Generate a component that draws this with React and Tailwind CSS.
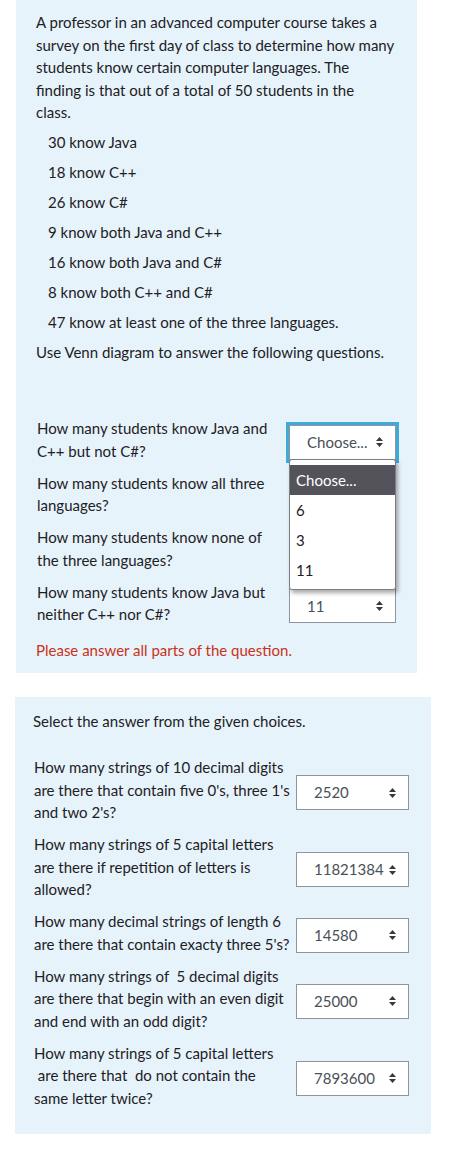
import React from "react";

const font = "font-['Lato','Open_Sans',sans-serif]";

function Arrows() {
  return (
    <svg width="7" height="10" viewBox="0 0 7 10" className="shrink-0">
      <path d="M3.5 0 L7 4 H0 Z" fill="#343a40" />
      <path d="M0 6 H7 L3.5 10 Z" fill="#343a40" />
    </svg>
  );
}

function Select({ value, width, focused }) {
  return (
    <div
      className={
        "flex h-[35px] shrink-0 items-center justify-between bg-white pl-[17px] pr-[12px] text-[#495057] " +
        width +
        (focused
          ? " border border-[#8f959e] shadow-[0_0_0_3px_#3fa9d8]"
          : " border border-[#8f959e]")
      }
    >
      <span>{value}</span>
      <Arrows />
    </div>
  );
}

function Row({ lines, children }) {
  return (
    <div className="flex items-center">
      <div className="w-[252px] shrink-0 whitespace-nowrap">
        {lines.map((l, i) => (
          <div key={i}>{l}</div>
        ))}
      </div>
      <div className="mt-[5.5px]">{children}</div>
    </div>
  );
}

const facts = [
  "30 know Java",
  "18 know C++",
  "26 know C#",
  "9 know both Java and C++",
  "16 know both Java and C#",
  "8 know both C++ and C#",
  "47 know at least one of the three languages.",
];

const second = [
  {
    lines: [
      "How many strings of 10 decimal digits",
      "are there that contain five 0's, three 1's",
      "and two 2's?",
    ],
    value: "2520",
  },
  {
    lines: [
      "How many strings of 5 capital letters",
      "are there if repetition of letters is",
      "allowed?",
    ],
    value: "11821384",
  },
  {
    lines: [
      "How many decimal strings of length 6",
      "are there that contain exacty three 5's?",
    ],
    value: "14580",
  },
  {
    lines: [
      "How many strings of \u00a05 decimal digits",
      "are there that begin with an even digit",
      "and end with an odd digit?",
    ],
    value: "25000",
  },
  {
    lines: [
      "How many strings of 5 capital letters",
      "\u00a0are there that \u00a0do not contain the",
      "same letter twice?",
    ],
    value: "7893600",
  },
];

export default function App() {
  return (
    <div className={"min-h-screen bg-white text-[15px] leading-[22.5px] text-[#1d2125] " + font}>
      {/* first question */}
      <div className="ml-[16px] w-[401px] bg-[#e7f3fa] px-[20px] pt-[11px] pb-[12px]">
        <div className="whitespace-nowrap">
          A professor in an advanced computer course takes a<br />
          survey on the first day of class to determine how many<br />
          students know certain computer languages. The<br />
          finding is that out of a total of 50 students in the<br />
          class.
        </div>
        <div className="whitespace-nowrap pl-[12px]">
          {facts.map((f) => (
            <div key={f} className="pt-[7.5px]">
              {f}
            </div>
          ))}
        </div>
        <div className="whitespace-nowrap pt-[7.5px]">Use Venn diagram to answer the following questions.</div>

        <div className="relative mt-[53.5px] flex flex-col gap-[9.5px] pl-[1px]">
          <Row lines={["How many students know Java and", "C++ but not C#?"]}>
            <Select value="Choose..." width="w-[107px]" focused />
          </Row>
          <Row lines={["How many students know all three", "languages?"]}>
            <Select value="Choose..." width="w-[107px]" />
          </Row>
          <Row lines={["How many students know none of", "the three languages?"]}>
            <Select value="Choose..." width="w-[107px]" />
          </Row>
          <Row lines={["How many students know Java but", "neither C++ nor C#?"]}>
            <Select value="11" width="w-[107px]" />
          </Row>

          {/* open dropdown list */}
          <div className="absolute left-[253px] top-[42px] w-[107px] rounded-[3px] border border-[#7a7f86] bg-white pt-[5px] pb-[4px] shadow-[2px_3px_4px_rgba(0,0,0,0.35)]">
            <div className="flex h-[30px] items-center bg-[#54535c] pl-[6px] text-white">Choose...</div>
            <div className="flex h-[30px] items-center pl-[6px]">6</div>
            <div className="flex h-[30px] items-center pl-[6px]">3</div>
            <div className="flex h-[30px] items-center pl-[6px]">11</div>
          </div>
        </div>

        <div className="mt-[13px] text-[#ca3120]">Please answer all parts of the question.</div>
      </div>

      {/* second question */}
      <div className="ml-[15px] mt-[24px] w-[416px] bg-[#e7f3fa] pl-[18px] pr-[20px] pt-[13px] pb-[25px]">
        <div>Select the answer from the given choices.</div>
        <div className="mt-[23.5px] flex flex-col gap-[9.5px] pl-[1px]">
          {second.map((q) => (
            <div key={q.value} className="flex items-center">
              <div className="w-[262px] shrink-0 whitespace-nowrap">
                {q.lines.map((l, i) => (
                  <div key={i}>{l}</div>
                ))}
              </div>
              <div className="mt-[5.5px]">
                <Select value={q.value} width="w-[113px]" />
              </div>
            </div>
          ))}
        </div>
      </div>
    </div>
  );
}
